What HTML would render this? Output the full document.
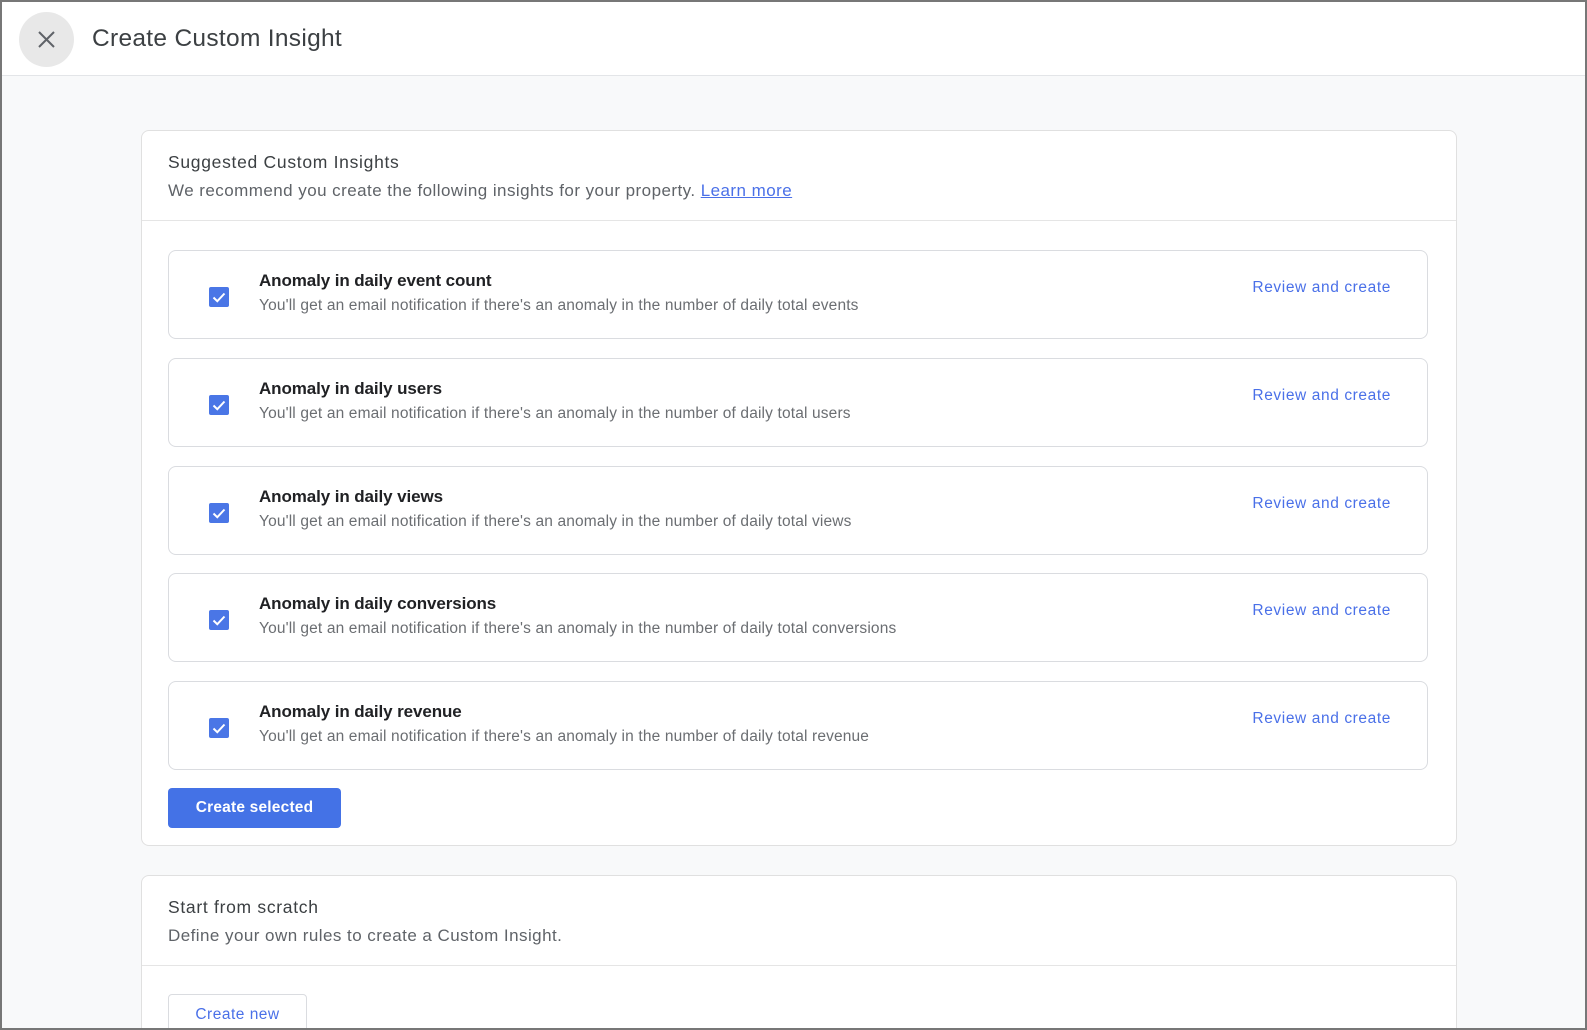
<!DOCTYPE html>
<html><head><meta charset="utf-8"><style>
*{box-sizing:border-box;margin:0;padding:0}
html,body{width:1587px;height:1030px;overflow:hidden;background:#fff}
body{font-family:"Liberation Sans",Arial,sans-serif;position:relative}
.frame{position:absolute;left:0;top:0;width:1587px;height:1030px;border:2px solid #777;background:#f8f9fa;overflow:hidden}
.hdr{position:absolute;left:0;top:0;right:0;height:74px;background:#fff;border-bottom:1px solid #e3e5e8}
.close{position:absolute;left:17px;top:10px;width:55px;height:55px;border-radius:50%;background:#e8e8e8}
.close svg{position:absolute;left:18px;top:18px}
.title{position:absolute;left:90px;top:23px;font-size:24.5px;color:#3c4043;letter-spacing:0.3px}
.card{position:absolute;left:139px;width:1316px;background:#fff;border:1px solid #e0e0e0;border-radius:8px}
.ch{padding:21px 26px 0 26px;height:90px;border-bottom:1px solid #e5e5e5}
.ch h3{font-weight:normal;font-size:17.5px;color:#3c4043;letter-spacing:0.7px}
.ch p{font-size:17px;color:#5f6368;margin-top:8px;letter-spacing:0.45px}
.ch a{color:#4a70e8;text-decoration:underline}
.row{position:absolute;left:26px;width:1260px;height:89px;border:1px solid #dadce0;border-radius:8px}
.cb{position:absolute;left:40px;top:36px;width:20px;height:20px;background:#4a76e6;border-radius:2px}
.rt{position:absolute;left:90px;top:20px;font-size:17px;color:#202124;font-weight:bold;letter-spacing:-0.1px}
.rd{position:absolute;left:90px;top:46px;font-size:15.5px;color:#6b6e72;letter-spacing:0.15px}
.rv{position:absolute;right:36px;top:28px;font-size:15.5px;color:#4a70e8;letter-spacing:0.6px}
.btn{position:absolute;left:26px;top:657px;width:173px;height:40px;background:#4472e6;border-radius:4px;color:#fff;font-size:15.5px;text-align:center;line-height:40px;font-weight:bold;letter-spacing:0.2px}
.btn2{position:absolute;left:26px;top:118px;width:139px;height:44px;border:1px solid #dadce0;border-radius:4px;color:#4a70e8;font-size:15.5px;text-align:center;line-height:40px;background:#fff;letter-spacing:0.5px}
</style></head><body>
<div class="frame">
<div class="hdr">
<div class="close"><svg width="19" height="19" viewBox="0 0 19 19"><path d="M2 2L17 17M17 2L2 17" stroke="#5f6368" stroke-width="2"/></svg></div>
<div class="title">Create Custom Insight</div>
</div>
<div class="card" style="top:128px;height:716px">
<div class="ch"><h3>Suggested Custom Insights</h3><p>We recommend you create the following insights for your property. <a>Learn more</a></p></div>
<div class="row" style="top:119px"><div class="cb"><svg width="20" height="20" viewBox="0 0 20 20"><path d="M4.5 10.5L8.3 14.2L15.5 6.5" stroke="#fff" stroke-width="2" fill="none"/></svg></div><div class="rt">Anomaly in daily event count</div><div class="rd">You'll get an email notification if there's an anomaly in the number of daily total events</div><div class="rv">Review and create</div></div>
<div class="row" style="top:227px"><div class="cb"><svg width="20" height="20" viewBox="0 0 20 20"><path d="M4.5 10.5L8.3 14.2L15.5 6.5" stroke="#fff" stroke-width="2" fill="none"/></svg></div><div class="rt">Anomaly in daily users</div><div class="rd">You'll get an email notification if there's an anomaly in the number of daily total users</div><div class="rv">Review and create</div></div>
<div class="row" style="top:335px"><div class="cb"><svg width="20" height="20" viewBox="0 0 20 20"><path d="M4.5 10.5L8.3 14.2L15.5 6.5" stroke="#fff" stroke-width="2" fill="none"/></svg></div><div class="rt">Anomaly in daily views</div><div class="rd">You'll get an email notification if there's an anomaly in the number of daily total views</div><div class="rv">Review and create</div></div>
<div class="row" style="top:442px"><div class="cb"><svg width="20" height="20" viewBox="0 0 20 20"><path d="M4.5 10.5L8.3 14.2L15.5 6.5" stroke="#fff" stroke-width="2" fill="none"/></svg></div><div class="rt">Anomaly in daily conversions</div><div class="rd">You'll get an email notification if there's an anomaly in the number of daily total conversions</div><div class="rv">Review and create</div></div>
<div class="row" style="top:550px"><div class="cb"><svg width="20" height="20" viewBox="0 0 20 20"><path d="M4.5 10.5L8.3 14.2L15.5 6.5" stroke="#fff" stroke-width="2" fill="none"/></svg></div><div class="rt">Anomaly in daily revenue</div><div class="rd">You'll get an email notification if there's an anomaly in the number of daily total revenue</div><div class="rv">Review and create</div></div>
<div class="btn">Create selected</div>
</div>
<div class="card" style="top:873px;height:200px">
<div class="ch"><h3>Start from scratch</h3><p>Define your own rules to create a Custom Insight.</p></div>
<div class="btn2">Create new</div>
</div>
</div>
</body></html>
